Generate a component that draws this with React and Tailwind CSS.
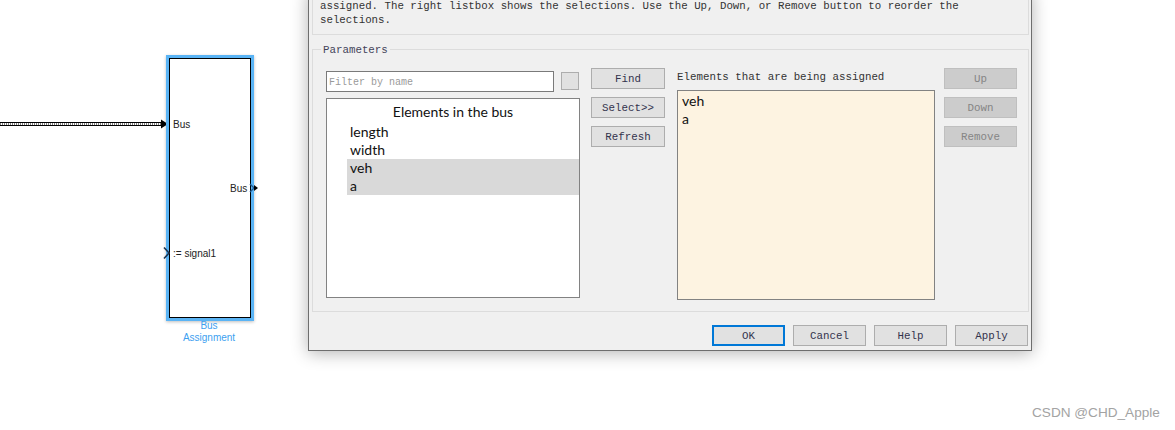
import React from "react";

const mono = "font-['Liberation_Mono',monospace]";
const sans = "font-['Lato','Noto_Sans',sans-serif]";
const arial = "font-['Liberation_Sans',Arial,sans-serif]";

function Btn({ children, w = "w-[74px]", disabled = false, focus = false }) {
  const base = `${w} h-[21px] flex items-center justify-center pt-[1px] ${mono} text-[10.8px] leading-none`;
  if (disabled)
    return <div className={`${base} border border-[#bfbfbf] bg-[#cccccc] text-[#858585]`}>{children}</div>;
  if (focus)
    return <div className={`${base} border-2 border-[#0078d7] bg-[#e1e1e1] text-[#33334d]`}>{children}</div>;
  return <div className={`${base} border border-[#adadad] bg-[#e1e1e1] text-[#33334d]`}>{children}</div>;
}

function Block() {
  return (
    <>
      <svg className="absolute left-0 top-0" width="300" height="430">
        <line x1="0" y1="122.5" x2="163" y2="122.5" stroke="#000" strokeWidth="1" />
        <line x1="0" y1="125.5" x2="163" y2="125.5" stroke="#000" strokeWidth="1" />
        <line x1="0" y1="124" x2="163" y2="124" stroke="#000" strokeWidth="1" strokeDasharray="1 1" />
        <polygon points="161,119.5 168,124 161,128.5" fill="#000" />
      </svg>
      <div className="absolute left-[166px] top-[55px] w-[88px] h-[266px] border-[3px] border-[#5ab4f5] shadow-[0_1px_3px_rgba(0,0,0,0.25)]">
        <div className="w-full h-full border border-black bg-white" />
      </div>
      <svg className="absolute left-0 top-0" width="300" height="430">
        <path d="M250 184 L254 188 L250 192" stroke="#1f5a8f" strokeWidth="1.4" fill="none" />
        <polygon points="254,185 258,188 254,191" fill="#000" />
        <path d="M164 247.5 L169 253 L164 258.5" stroke="#1b3350" strokeWidth="1.6" fill="none" />
      </svg>
      <div className={`absolute left-[173px] top-[119px] ${arial} text-[10px] leading-[12px] text-[#222]`}>Bus</div>
      <div className={`absolute left-[230px] top-[183px] ${arial} text-[10px] leading-[12px] text-[#222]`}>Bus</div>
      <div className={`absolute left-[173px] top-[248px] ${arial} text-[10px] leading-[12px] text-[#222]`}>:= signal1</div>
      <div className={`absolute left-[169px] top-[320px] w-[80px] text-center ${arial} text-[10px] leading-[12px] text-[#3d9ff0]`}>
        <div>Bus</div>
        <div>Assignment</div>
      </div>
    </>
  );
}

function Dialog() {
  return (
    <div className="absolute left-[308px] top-[-10px] w-[724px] h-[361px] border border-[#6e6e6e] bg-[#f0f0f0] shadow-[0_2px_16px_rgba(0,0,0,0.3)] flex flex-col">
      <div className={`ml-[3px] w-[717px] border border-[#dcdcdc] pt-[7px] pb-[7px] pl-[7px] ${mono} text-[10.75px] leading-[14px] text-[#333] whitespace-pre`}>
        <div>assigned. The right listbox shows the selections. Use the Up, Down, or Remove button to reorder the</div>
        <div>selections.</div>
      </div>
      <div className="relative mt-[14px] ml-[3px] w-[717px] h-[263px] border border-[#dcdcdc] pt-[18px] pl-[13px] flex">
        <div className={`absolute left-[8px] top-[-7px] px-[2px] bg-[#f0f0f0] ${mono} text-[10.8px] leading-[14px] text-[#44445a]`}>Parameters</div>
        <div className="w-[254px] flex flex-col">
          <div className="mt-[3px] flex items-start">
            <div className={`w-[228px] h-[21px] border border-[#7a7a7a] bg-white flex items-center pl-[2px] pt-[1px] ${mono} text-[10px] text-[#9a9a9a]`}>Filter by name</div>
            <div className="ml-[7px] mt-[1px] w-[18px] h-[18px] border border-[#adadad] bg-[#e1e1e1]" />
          </div>
          <div className="mt-[6px] w-[254px] h-[200px] border border-[#828282] bg-white">
            <div className={`h-[24px] flex items-center justify-center ${sans} text-[14px] text-[#111]`}>Elements in the bus</div>
            <div className={`${sans} text-[14px] leading-[18px] text-[#111]`}>
              <div className="ml-[20px] pl-[3px] h-[18px]">length</div>
              <div className="ml-[20px] pl-[3px] h-[18px]">width</div>
              <div className="ml-[20px] pl-[3px] h-[18px] bg-[#d9d9d9]">veh</div>
              <div className="ml-[20px] pl-[3px] h-[18px] bg-[#d9d9d9]">a</div>
            </div>
          </div>
        </div>
        <div className="ml-[11px] flex flex-col gap-[8px]">
          <Btn>Find</Btn>
          <Btn>Select&gt;&gt;</Btn>
          <Btn>Refresh</Btn>
        </div>
        <div className="ml-[12px] w-[258px] flex flex-col">
          <div className={`h-[22px] pt-[2px] ${mono} text-[10.8px] leading-[14px] text-[#333]`}>Elements that are being assigned</div>
          <div className={`w-[258px] h-[210px] border border-[#828282] bg-[#fdf3e1] pt-[1px] pl-[4px] ${sans} text-[14px] leading-[18px] text-[#111]`}>
            <div className="h-[18px]">veh</div>
            <div className="h-[18px]">a</div>
          </div>
        </div>
        <div className="ml-[9px] flex flex-col gap-[8px]">
          <Btn w="w-[73px]" disabled>Up</Btn>
          <Btn w="w-[73px]" disabled>Down</Btn>
          <Btn w="w-[73px]" disabled>Remove</Btn>
        </div>
      </div>
      <div className="mt-[13px] mr-[3px] flex justify-end gap-[8px]">
        <Btn w="w-[73px]" focus>OK</Btn>
        <Btn w="w-[73px]">Cancel</Btn>
        <Btn w="w-[73px]">Help</Btn>
        <Btn w="w-[73px]">Apply</Btn>
      </div>
    </div>
  );
}

export default function App() {
  return (
    <div className="relative w-[1175px] h-[430px] bg-white overflow-hidden">
      <Block />
      <Dialog />
      <div className={`absolute left-[1032px] top-[405px] ${arial} text-[13.6px] leading-[16px] text-[#a3a3a3]`}>CSDN @CHD_Apple</div>
    </div>
  );
}
